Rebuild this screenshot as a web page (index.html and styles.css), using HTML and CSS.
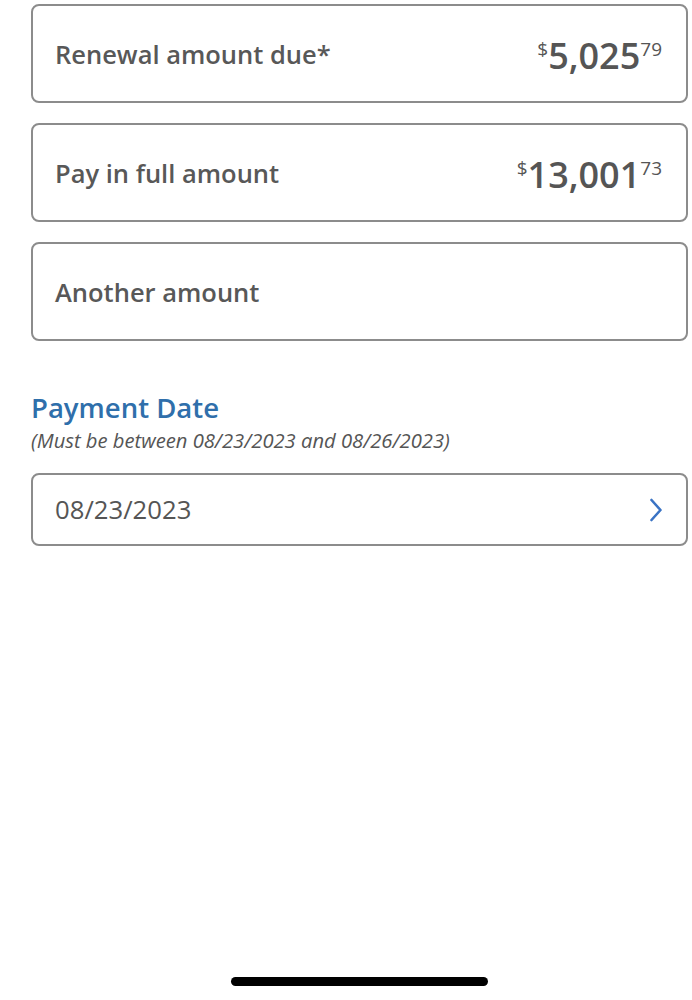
FILE: index.html
```html
<!DOCTYPE html>
<html lang="en">
  <head>
    <meta charset="UTF-8" />
    <meta name="viewport" content="width=device-width, initial-scale=1.0" />
    <title>Make a payment</title>
    <link rel="stylesheet" href="styles.css">
  </head>
  <body>
    <div class="page">
      <div class="amount-list">
        <div class="amount-option">
          <span class="option-label">Renewal amount due*</span>
          <span class="price"><sup>$</sup>5,025<sup>79</sup></span>
        </div>
        <div class="amount-option">
          <span class="option-label">Pay in full amount</span>
          <span class="price"><sup>$</sup>13,001<sup>73</sup></span>
        </div>
        <div class="amount-option">
          <span class="option-label">Another amount</span>
        </div>
      </div>

      <h2 class="section-title">Payment Date</h2>
      <p class="hint">(Must be between 08/23/2023 and 08/26/2023)</p>

      <div class="date-field">
        <span class="date-value">08/23/2023</span>
        <svg class="chevron" width="16" height="26" viewBox="0 0 16 26">
          <path d="M3.5 3 L12.5 13 L3.5 23" fill="none" stroke="#3a73c4" stroke-width="2.6" stroke-linecap="round" stroke-linejoin="round" />
        </svg>
      </div>
    </div>
    <div class="home-indicator"></div>
  </body>
</html>
```

FILE: styles.css
```css
body {
  margin: 0;
  padding: 0;
  font-family: "Open Sans", Arial, sans-serif;
  background-color: #fff;
  color: #555;
  height: 1000px;
  position: relative;
  overflow: hidden;
}

.page {
  padding: 4px 4px 0 31px;
}

.amount-list {
  display: flex;
  flex-direction: column;
  gap: 20px;
}

.amount-option {
  display: flex;
  align-items: center;
  justify-content: space-between;
  height: 95px;
  border: 2px solid #8c8c8c;
  border-radius: 8px;
  padding: 0 24px 0 22px;
}

.option-label {
  font-size: 25.5px;
  font-weight: 600;
  color: #585858;
}

.price {
  display: flex;
  align-items: flex-start;
  font-size: 36px;
  font-weight: 600;
  color: #555;
  line-height: 1;
  margin-top: 4px;
}

.price sup {
  font-size: 19px;
  font-weight: 500;
  line-height: 1;
  margin-top: 2px;
}

.section-title {
  margin: 49px 0 0;
  font-size: 27.5px;
  font-weight: 600;
  color: #2f6fab;
  line-height: 36px;
}

.hint {
  margin: 0;
  font-size: 20.2px;
  font-style: italic;
  color: #555;
  line-height: 28px;
}

.date-field {
  display: flex;
  align-items: center;
  justify-content: space-between;
  height: 69px;
  margin-top: 19px;
  border: 2px solid #8c8c8c;
  border-radius: 8px;
  padding: 0 22px 0 22px;
}

.date-value {
  font-size: 25.7px;
  color: #555;
}

.home-indicator {
  position: absolute;
  left: 231px;
  top: 977px;
  width: 257px;
  height: 9px;
  border-radius: 5px;
  background-color: #000;
}
```
